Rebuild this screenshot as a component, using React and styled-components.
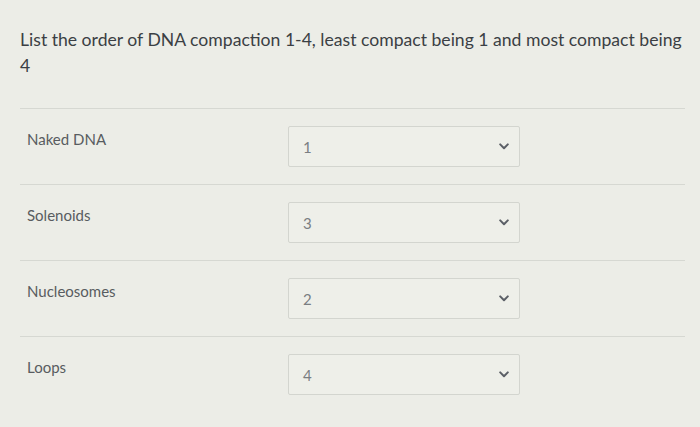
import React from "react";
import styled, { createGlobalStyle } from "styled-components";

const ITEMS = [
  { label: "Naked DNA", value: "1" },
  { label: "Solenoids", value: "3" },
  { label: "Nucleosomes", value: "2" },
  { label: "Loops", value: "4" },
];

const GlobalStyle = createGlobalStyle`
  html, body {
    margin: 0;
    padding: 0;
    background: #ecede7;
  }
  body {
    font-family: Lato, "Liberation Sans", sans-serif;
    height: 427px;
    overflow: hidden;
  }
`;

const Chevron = () => (
  <svg width="10" height="7" viewBox="0 0 10 7" aria-hidden="true">
    <path
      d="M1.2 1.4 L5 5.2 L8.8 1.4"
      fill="none"
      stroke="#5b5f66"
      strokeWidth="2"
      strokeLinecap="round"
      strokeLinejoin="round"
    />
  </svg>
);

const Question = ({ prompt, items }) => (
  <Wrapper>
    <Prompt>{prompt}</Prompt>
    {items.map((item) => (
      <Row key={item.label}>
        <Label>{item.label}</Label>
        <SelectBox role="combobox">
          <Value>{item.value}</Value>
          <Chevron />
        </SelectBox>
      </Row>
    ))}
  </Wrapper>
);

const App = () => (
  <>
    <GlobalStyle />
    <Question
      prompt="List the order of DNA compaction 1-4, least compact being 1 and most compact being 4"
      items={ITEMS}
    />
  </>
);

const Wrapper = styled.div`
  padding: 27px 15px 0 20px;
  display: flex;
  flex-direction: column;
`;

const Prompt = styled.p`
  margin: 0 0 29px;
  font-size: 17.6px;
  line-height: 26px;
  color: #3b3f44;
  width: 675px;
`;

const Row = styled.div`
  border-top: 1px solid #d6d8d2;
  padding: 17px 0 17px 7px;
  display: grid;
  grid-template-columns: 261px 232px;
  align-items: start;
`;

const Label = styled.div`
  margin-top: 4px;
  font-size: 15px;
  line-height: 18px;
  color: #585c60;
`;

const SelectBox = styled.div`
  box-sizing: border-box;
  height: 41px;
  border: 1px solid #d3d5cf;
  border-radius: 2px;
  background: #eeefe9;
  display: flex;
  align-items: center;
  justify-content: space-between;
  padding: 0 10px 0 14px;
`;

const Value = styled.span`
  font-size: 15px;
  color: #7a7e82;
`;

export default App;
